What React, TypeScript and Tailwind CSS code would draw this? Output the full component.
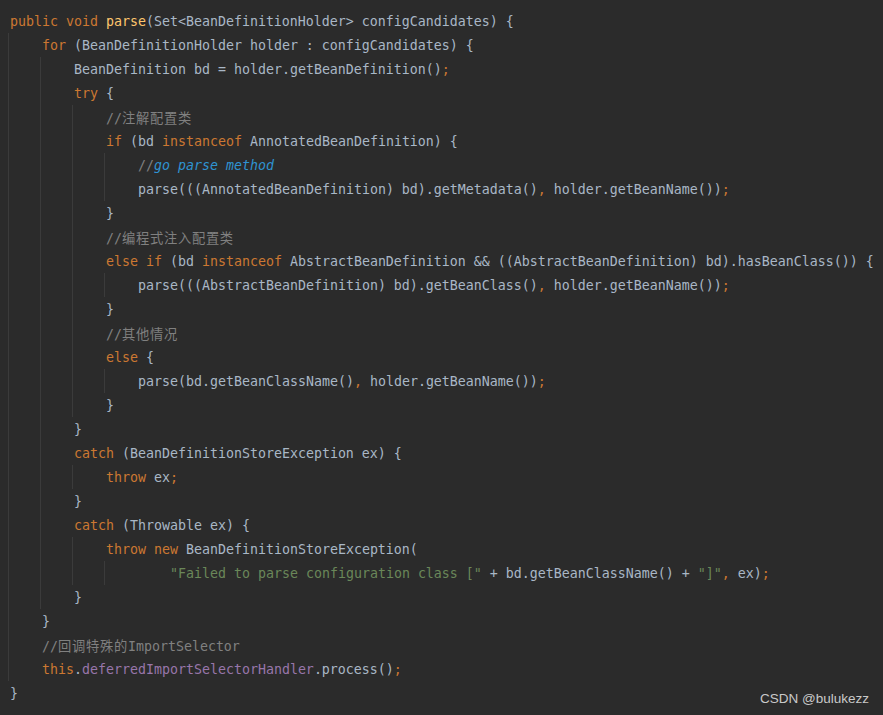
type Tok = [string, string];

// token colours (Darcula-ish)
const K = "text-[#cc7832]"; // keyword / punctuation
const T = "text-[#a9b7c6]"; // plain
const M = "text-[#ffc66d]"; // method declaration
const C = "text-[#808080]"; // comment
const S = "text-[#6a8759]"; // string
const F = "text-[#9876aa]"; // field
const B = "text-[#2f93d1] italic"; // highlighted comment

interface Line {
  indent: number;
  guides: number;
  toks: Tok[];
}

const cjk = /[\u4e00-\u9fff]/;

const lines: Line[] = [
  { indent: 0, guides: 0, toks: [[K, "public void "], [M, "parse"], [T, "(Set<BeanDefinitionHolder> configCandidates) {"]] },
  { indent: 1, guides: 1, toks: [[K, "for "], [T, "(BeanDefinitionHolder holder : configCandidates) {"]] },
  { indent: 2, guides: 2, toks: [[T, "BeanDefinition bd = holder.getBeanDefinition()"], [K, ";"]] },
  { indent: 2, guides: 2, toks: [[K, "try "], [T, "{"]] },
  { indent: 3, guides: 3, toks: [[C, "//注解配置类"]] },
  { indent: 3, guides: 3, toks: [[K, "if "], [T, "(bd "], [K, "instanceof "], [T, "AnnotatedBeanDefinition) {"]] },
  { indent: 4, guides: 4, toks: [[C, "//"], [B, "go parse method"]] },
  { indent: 4, guides: 4, toks: [[T, "parse(((AnnotatedBeanDefinition) bd).getMetadata()"], [K, ", "], [T, "holder.getBeanName())"], [K, ";"]] },
  { indent: 3, guides: 3, toks: [[T, "}"]] },
  { indent: 3, guides: 3, toks: [[C, "//编程式注入配置类"]] },
  { indent: 3, guides: 3, toks: [[K, "else if "], [T, "(bd "], [K, "instanceof "], [T, "AbstractBeanDefinition && ((AbstractBeanDefinition) bd).hasBeanClass()) {"]] },
  { indent: 4, guides: 4, toks: [[T, "parse(((AbstractBeanDefinition) bd).getBeanClass()"], [K, ", "], [T, "holder.getBeanName())"], [K, ";"]] },
  { indent: 3, guides: 3, toks: [[T, "}"]] },
  { indent: 3, guides: 3, toks: [[C, "//其他情况"]] },
  { indent: 3, guides: 3, toks: [[K, "else "], [T, "{"]] },
  { indent: 4, guides: 4, toks: [[T, "parse(bd.getBeanClassName()"], [K, ", "], [T, "holder.getBeanName())"], [K, ";"]] },
  { indent: 3, guides: 3, toks: [[T, "}"]] },
  { indent: 2, guides: 2, toks: [[T, "}"]] },
  { indent: 2, guides: 2, toks: [[K, "catch "], [T, "(BeanDefinitionStoreException ex) {"]] },
  { indent: 3, guides: 3, toks: [[K, "throw "], [T, "ex"], [K, ";"]] },
  { indent: 2, guides: 2, toks: [[T, "}"]] },
  { indent: 2, guides: 2, toks: [[K, "catch "], [T, "(Throwable ex) {"]] },
  { indent: 3, guides: 3, toks: [[K, "throw new "], [T, "BeanDefinitionStoreException("]] },
  { indent: 5, guides: 4, toks: [[S, "\"Failed to parse configuration class [\""], [T, " + bd.getBeanClassName() + "], [S, "\"]\""], [K, ", "], [T, "ex)"], [K, ";"]] },
  { indent: 2, guides: 2, toks: [[T, "}"]] },
  { indent: 1, guides: 1, toks: [[T, "}"]] },
  { indent: 1, guides: 1, toks: [[C, "//回调特殊的ImportSelector"]] },
  { indent: 1, guides: 1, toks: [[K, "this"], [T, "."], [F, "deferredImportSelectorHandler"], [T, ".process()"], [K, ";"]] },
  { indent: 0, guides: 0, toks: [[T, "}"]] },
];

function Text({ text }: { text: string }) {
  // split CJK runs so they get the CJK font and a 14px cell
  const parts: { s: string; wide: boolean }[] = [];
  for (const ch of text) {
    const wide = cjk.test(ch);
    const last = parts[parts.length - 1];
    if (last && last.wide === wide) last.s += ch;
    else parts.push({ s: ch, wide });
  }
  return (
    <>
      {parts.map((p, i) =>
        p.wide ? (
          <span key={i} className="font-['Noto_Sans_CJK_SC',sans-serif] tracking-[0.7px]">
            {p.s}
          </span>
        ) : (
          <span key={i}>{p.s}</span>
        )
      )}
    </>
  );
}

function CodeLine({ line }: { line: Line }) {
  const units = [];
  for (let i = 0; i < line.indent; i++) {
    units.push(
      <div
        key={i}
        className={
          "h-6 w-8 shrink-0 " + (i < line.guides ? "border-l border-[#3b3b3b]" : "")
        }
      />
    );
  }
  return (
    <div className="flex h-6 items-center pl-2">
      {units}
      <div className="relative top-[1px] ml-[2px] whitespace-pre leading-6">
        {line.toks.map(([cls, text], i) => (
          <span key={i} className={cls}>
            <Text text={text} />
          </span>
        ))}
      </div>
    </div>
  );
}

export default function App() {
  return (
    <div className="relative h-[715px] w-[883px] overflow-hidden bg-[#2b2b2b] pt-[9px] font-['DejaVu_Sans_Mono',monospace] text-[13.29px]">
      {lines.map((line, i) => (
        <CodeLine key={i} line={line} />
      ))}
      <div className="absolute bottom-[6px] right-[14px] font-['Liberation_Sans',Arial,sans-serif] text-[13.5px] text-[#c9c9c9]">
        CSDN @bulukezz
      </div>
    </div>
  );
}
